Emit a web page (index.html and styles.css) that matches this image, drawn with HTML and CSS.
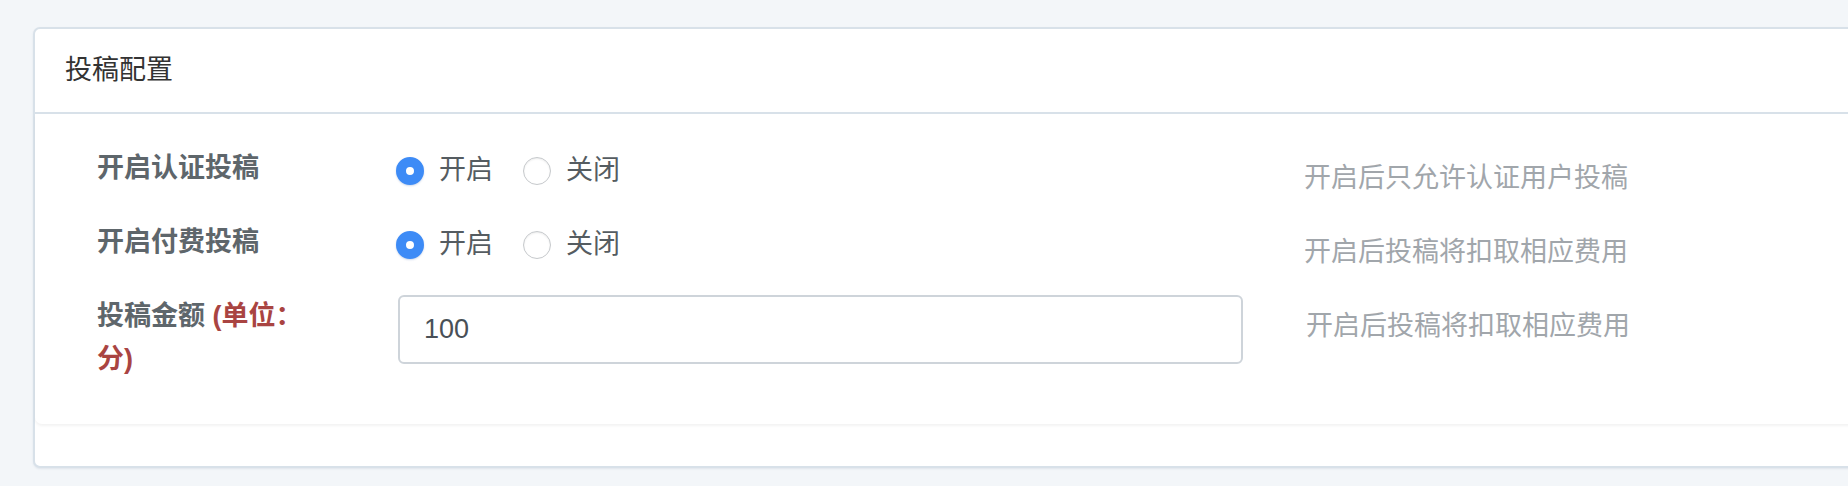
FILE: index.html
```html
<!DOCTYPE html>
<html lang="zh-CN">
<head>
    <meta charset="UTF-8">
    <meta name="viewport" content="width=device-width, initial-scale=1.0">
    <title>投稿配置</title>
    <link rel="stylesheet" href="styles.css">
</head>
<body class="page">
    <div class="card">
        <div class="card-header">投稿配置</div>
        <div class="card-body">
            <div class="form-row">
                <label class="form-label">开启认证投稿</label>
                <div class="form-control-col radio-group">
                    <label class="radio"><input type="radio" name="auth" checked><span>开启</span></label>
                    <label class="radio"><input type="radio" name="auth"><span>关闭</span></label>
                </div>
                <div class="form-help">开启后只允许认证用户投稿</div>
            </div>
            <div class="form-row">
                <label class="form-label">开启付费投稿</label>
                <div class="form-control-col radio-group">
                    <label class="radio"><input type="radio" name="pay" checked><span>开启</span></label>
                    <label class="radio"><input type="radio" name="pay"><span>关闭</span></label>
                </div>
                <div class="form-help">开启后投稿将扣取相应费用</div>
            </div>
            <div class="form-row">
                <label class="form-label" for="amount">投稿金额 <span class="text-danger">(单位：分)</span></label>
                <div class="form-control-col">
                    <input class="form-input" type="text" id="amount" value="100">
                </div>
                <div class="form-help">开启后投稿将扣取相应费用</div>
            </div>
        </div>
        <div class="card-footer"></div>
    </div>
</body>
</html>
```

FILE: styles.css
```css
* {
    box-sizing: border-box;
}

html,
body {
    overflow: hidden;
}

body {
    margin: 0;
    font-family: "Liberation Sans", "Noto Sans CJK SC", sans-serif;
    font-size: 27px;
}

.page {
    min-height: 100vh;
    background-color: #f3f6f9;
    padding: 27px 0 0 33px;
}

.card {
    width: 1880px;
    background-color: #fff;
    border: 2px solid #d8e1e9;
    border-radius: 7px;
    box-shadow: 0 1px 2px rgba(80, 110, 140, 0.12);
}

.card-header {
    height: 85px;
    line-height: 83px;
    padding-left: 30px;
    color: #333;
    border-bottom: 2px solid #d8e1e9;
}

.card-body {
    display: flex;
    flex-direction: column;
    gap: 21px;
    padding: 33px 0 43px 62px;
    border-radius: 0 0 7px 7px;
    box-shadow: 0 2px 3px rgba(0, 0, 0, 0.05);
}

.card-footer {
    height: 42px;
}

.form-row {
    display: flex;
    align-items: flex-start;
}

.form-label {
    flex: 0 0 301px;
    padding-right: 86px;
    line-height: 43px;
    font-weight: 700;
    color: #5e666b;
}

.text-danger {
    color: #a94442;
}

.form-control-col {
    flex: 0 0 845px;
}

.radio-group {
    display: flex;
    gap: 30px;
    padding-top: 2px;
    margin-left: -2px;
}

.radio {
    display: flex;
    align-items: center;
    gap: 15px;
    line-height: 43px;
    color: #555c61;
}

.radio input {
    appearance: none;
    margin: 0;
    width: 28px;
    height: 28px;
    border-radius: 9999px;
    border: 1px solid #c6c9cc;
    background-color: #fff;
    box-shadow: inset 0 1px 2px rgba(0, 0, 0, 0.08);
}

.radio input:checked {
    border: 10px solid #3d8bf6;
    box-shadow: 0 1px 2px rgba(0, 60, 150, 0.2);
}

.form-input {
    width: 100%;
    height: 69px;
    padding: 0 24px;
    font-family: inherit;
    font-size: 27px;
    color: #495057;
    border: 2px solid #ced4da;
    border-radius: 6px;
    outline: none;
}

.form-help {
    margin-left: 63px;
    padding-top: 10px;
    line-height: 43px;
    color: #a1a6ab;
    white-space: nowrap;
}
```
